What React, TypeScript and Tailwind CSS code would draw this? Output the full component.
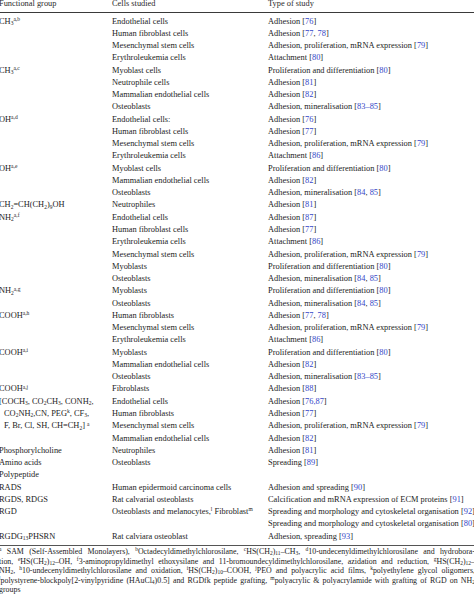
import type { ReactNode } from "react";

// Cell-study table: functional group / cells studied / type of study, with footnotes.

const R = ({ children }: { children: ReactNode }) => (
  <span className="text-[#3446c8]">{children}</span>
);

const Sup = ({ children }: { children: ReactNode }) => (
  <sup className="text-[5.5px]">{children}</sup>
);

const Sub = ({ children }: { children: ReactNode }) => (
  <sub className="text-[5.5px]">{children}</sub>
);

type Row = [ReactNode, ReactNode, ReactNode];

const ref = (label: string, n: string) => (
  <>
    {label} [<R>{n}</R>]
  </>
);

const refs2 = (label: string, a: string, b: string) => (
  <>
    {label} [<R>{a}</R>, <R>{b}</R>]
  </>
);

const ROWS: Row[] = [
  [<>CH<Sub>3</Sub><Sup>a,b</Sup></>, "Endothelial cells", ref("Adhesion", "76")],
  ["", "Human fibroblast cells", refs2("Adhesion", "77", "78")],
  ["", "Mesenchymal stem cells", ref("Adhesion, proliferation, mRNA expression", "79")],
  ["", "Erythroleukemia cells", ref("Attachment", "80")],
  [<>CH<Sub>3</Sub><Sup>a,c</Sup></>, "Myoblast cells", ref("Proliferation and differentiation", "80")],
  ["", "Neutrophile cells", ref("Adhesion", "81")],
  ["", "Mammalian endothelial cells", ref("Adhesion", "82")],
  ["", "Osteoblasts", ref("Adhesion, mineralisation", "83–85")],
  [<>OH<Sup>a,d</Sup></>, "Endothelial cells:", ref("Adhesion", "76")],
  ["", "Human fibroblast cells", ref("Adhesion", "77")],
  ["", "Mesenchymal stem cells", ref("Adhesion, proliferation, mRNA expression", "79")],
  ["", "Erythroleukemia cells", ref("Attachment", "86")],
  [<>OH<Sup>a,e</Sup></>, "Myoblast cells", ref("Proliferation and differentiation", "80")],
  ["", "Mammalian endothelial cells", ref("Adhesion", "82")],
  ["", "Osteoblasts", refs2("Adhesion, mineralisation", "84", "85")],
  [<>CH<Sub>2</Sub>=CH(CH<Sub>2</Sub>)<Sub>9</Sub>OH</>, "Neutrophiles", ref("Adhesion", "81")],
  [<>NH<Sub>2</Sub><Sup>a,f</Sup></>, "Endothelial cells", ref("Adhesion", "87")],
  ["", "Human fibroblast cells", ref("Adhesion", "77")],
  ["", "Erythroleukemia cells", ref("Attachment", "86")],
  ["", "Mesenchymal stem cells", ref("Adhesion, proliferation, mRNA expression", "79")],
  ["", "Myoblasts", ref("Proliferation and differentiation", "80")],
  ["", "Osteoblasts", refs2("Adhesion, mineralisation", "84", "85")],
  [<>NH<Sub>2</Sub><Sup>a,g</Sup></>, "Myoblasts", ref("Proliferation and differentiation", "80")],
  ["", "Osteoblasts", refs2("Adhesion, mineralisation", "84", "85")],
  [<>COOH<Sup>a,h</Sup></>, "Human fibroblasts", refs2("Adhesion", "77", "78")],
  ["", "Mesenchymal stem cells", ref("Adhesion, proliferation, mRNA expression", "79")],
  ["", "Erythroleukemia cells", ref("Attachment", "86")],
  [<>COOH<Sup>a,i</Sup></>, "Myoblasts", ref("Proliferation and differentiation", "80")],
  ["", "Mammalian endothelial cells", ref("Adhesion", "82")],
  ["", "Osteoblasts", ref("Adhesion, mineralisation", "83–85")],
  [<>COOH<Sup>a,j</Sup></>, "Fibroblasts", ref("Adhesion", "88")],
  [
    <>[COCH<Sub>3</Sub>, CO<Sub>2</Sub>CH<Sub>3</Sub>, CONH<Sub>2</Sub>,</>,
    "Endothelial cells",
    ref("Adhesion", "76,87"),
  ],
  [
    <span className="pl-[5px]">CO<Sub>2</Sub>NH<Sub>2</Sub>,CN, PEG<Sup>k</Sup>, CF<Sub>3</Sub>,</span>,
    "Human fibroblasts",
    ref("Adhesion", "77"),
  ],
  [
    <span className="pl-[5px]">F, Br, Cl, SH, CH=CH<Sub>2</Sub>] <Sup>a</Sup></span>,
    "Mesenchymal stem cells",
    ref("Adhesion, proliferation, mRNA expression", "79"),
  ],
  ["", "Mammalian endothelial cells", ref("Adhesion", "82")],
  ["Phosphorylcholine", "Neutrophiles", ref("Adhesion", "81")],
  ["Amino acids", "Osteoblasts", ref("Spreading", "89")],
  ["Polypeptide", "", ""],
  ["RADS", "Human epidermoid carcinoma cells", ref("Adhesion and spreading", "90")],
  ["RGDS, RDGS", "Rat calvarial osteoblasts", ref("Calcification and mRNA expression of ECM proteins", "91")],
  [
    "RGD",
    <>Osteoblasts and melanocytes,<Sup>l</Sup> Fibroblast<Sup>m</Sup></>,
    ref("Spreading and morphology and cytoskeletal organisation", "92"),
  ],
  ["", "", ref("Spreading and morphology and cytoskeletal organisation", "80")],
  [<>RGDG<Sub>13</Sub>PHSRN</>, "Rat calviara osteoblast", ref("Adhesion, spreading", "93")],
];

const NOTES: ReactNode[] = [
  <>
    <Sup>a</Sup> SAM (Self-Assembled Monolayers), <Sup>b</Sup>Octadecyldimethylchlorosilane, <Sup>c</Sup>HS(CH<Sub>2</Sub>)<Sub>11</Sub>–CH<Sub>3</Sub>, <Sup>d</Sup>10-undecenyldimethylchlorosilane and hydrobora-
  </>,
  <>
    tion, <Sup>e</Sup>HS(CH<Sub>2</Sub>)<Sub>12</Sub>–OH, <Sup>f</Sup>3-aminopropyldimethyl ethoxysilane and 11-bromoundecyldimethylchlorosilane, azidation and reduction, <Sup>g</Sup>HS(CH<Sub>2</Sub>)<Sub>12</Sub>–
  </>,
  <>
    NH<Sub>2</Sub>, <Sup>h</Sup>10-undecenyldimethylchlorosilane and oxidation, <Sup>i</Sup>HS(CH<Sub>2</Sub>)<Sub>10</Sub>–COOH, <Sup>j</Sup>PEO and polyacrylic acid films, <Sup>k</Sup>polyethylene glycol oligomers,
  </>,
  <>
    <Sup>l</Sup>polystyrene-blockpoly[2-vinylpyridine (HAuCl<Sub>4</Sub>)0.5] and RGDfk peptide grafting, <Sup>m</Sup>polyacrylic &amp; polyacrylamide with grafting of RGD on NH<Sub>2</Sub>
  </>,
];

export default function App() {
  return (
    <div className="h-[594px] w-[474px] overflow-hidden bg-white font-[family-name:'Liberation_Serif',serif] text-[8.4px] text-[#1c1c1c]">
      <div className="-ml-[1px] -mt-[2px] w-[476px]">
        <div className="grid grid-cols-[113px_156px_1fr] leading-[12px] text-[#2a2a2a]">
          <div>Functional group</div>
          <div>Cells studied</div>
          <div>Type of study</div>
        </div>
        <div className="mt-[1.5px] h-[1.5px] bg-[#3a3a3a]" />
        <div className="mt-[2.5px] grid grid-cols-[113px_156px_1fr] leading-[12.26px]">
          {ROWS.map(([a, b, c], i) => (
            <div key={i} className="contents">
              <div className="whitespace-nowrap">{a}</div>
              <div className="whitespace-nowrap">{b}</div>
              <div className="whitespace-nowrap">{c}</div>
            </div>
          ))}
        </div>
        <div className="mt-[2px] h-[1px] bg-[#555]" />
        <div className="mt-[1px] text-[7.9px] leading-[9.6px]">
          {NOTES.map((n, i) => (
            <div key={i} className="whitespace-nowrap text-justify [text-align-last:justify]">
              {n}
            </div>
          ))}
          <div>groups</div>
        </div>
      </div>
    </div>
  );
}
